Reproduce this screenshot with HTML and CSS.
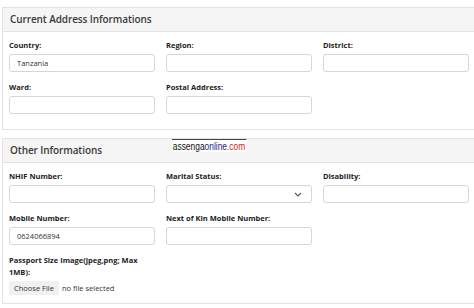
FILE: index.html
```html
<!DOCTYPE html>
<html lang="en">

<head>
    <meta charset="UTF-8">
    <meta name="viewport" content="width=device-width, initial-scale=1.0">
    <title>Registration form</title>
    <link rel="stylesheet" href="styles.css">
</head>

<body>
    <div class="card">
        <div class="card-header">Current Address Informations</div>
        <div class="card-body">
            <div class="row">
                <div class="group">
                    <label>Country:</label>
                    <input type="text" value="Tanzania">
                </div>
                <div class="group">
                    <label>Region:</label>
                    <input type="text">
                </div>
                <div class="group">
                    <label>District:</label>
                    <input type="text">
                </div>
            </div>
            <div class="row">
                <div class="group">
                    <label>Ward:</label>
                    <input type="text">
                </div>
                <div class="group">
                    <label>Postal Address:</label>
                    <input type="text">
                </div>
            </div>
        </div>
    </div>

    <div class="card second">
        <div class="card-header">Other Informations</div>
        <div class="watermark">assenga<span class="online">online</span><span class="com">.com</span></div>
        <div class="card-body">
            <div class="row">
                <div class="group">
                    <label>NHIF Number:</label>
                    <input type="text">
                </div>
                <div class="group">
                    <label>Marital Status:</label>
                    <div class="select">
                        <svg width="8" height="5" viewBox="0 0 8 5"><path d="M1 1 L4 4 L7 1" fill="none" stroke="#555" stroke-width="1.1"/></svg>
                    </div>
                </div>
                <div class="group">
                    <label>Disability:</label>
                    <input type="text">
                </div>
            </div>
            <div class="row">
                <div class="group">
                    <label>Mobile Number:</label>
                    <input type="text" value="0624066894">
                </div>
                <div class="group">
                    <label>Next of Kin Mobile Number:</label>
                    <input type="text">
                </div>
            </div>
            <div class="row">
                <div class="group last">
                    <label>Passport Size Image(jpeg,png; Max 1MB):</label>
                    <div class="file">
                        <span class="file-btn">Choose File</span>
                        <span>no file selected</span>
                    </div>
                </div>
            </div>
        </div>
    </div>
</body>

</html>
```

FILE: styles.css
```css
* {
    margin: 0;
    padding: 0;
    box-sizing: border-box;
    font-family: "Open Sans", sans-serif;
}

body {
    background: #fff;
    color: #333;
    padding-top: 7px;
    width: 480px;
}

.card {
    margin-left: 2px;
    width: 478px;
    border: 1px solid #e3e3e3;
    border-right: none;
    position: relative;
}

.second {
    margin-top: 8px;
}

.card-header {
    background: #f5f5f5;
    border-bottom: 1px solid #e3e3e3;
    height: 24px;
    padding: 0 7px;
    font-size: 10px;
    font-weight: 600;
    letter-spacing: -0.1px;
    line-height: 22px;
    color: #3a3a3a;
}

.card-body {
    padding: 7px 7px 6px 6px;
}

.row {
    display: grid;
    grid-template-columns: 146px 146px 146px;
    column-gap: 11px;
}

.group {
    margin-bottom: 9px;
}

.group.last {
    margin-bottom: 2px;
}

label {
    display: block;
    font-size: 7.5px;
    font-weight: bold;
    line-height: 12px;
    margin-bottom: 3px;
    color: #222;
}

input,
.select {
    display: block;
    width: 146px;
    height: 18px;
    border: 1px solid #d6d6d6;
    border-radius: 3px;
    padding: 0 7px;
    font-size: 7.5px;
    color: #333;
    background: #fff;
    outline: none;
}

.select {
    display: flex;
    align-items: center;
    justify-content: flex-end;
    padding-right: 9px;
}

.file {
    display: flex;
    align-items: center;
    gap: 3px;
    font-size: 7.5px;
    color: #333;
}

.file-btn {
    background: #f0f0f0;
    border-radius: 2px;
    padding: 2px 5px;
    line-height: 10px;
}

.watermark {
    position: absolute;
    left: 169px;
    top: 0;
    background: #fff;
    border-top: 1px solid #444;
    padding: 0 1px;
    font-family: "Liberation Sans", sans-serif;
    font-size: 10.5px;
    line-height: 12px;
    color: #111;
    transform: scaleX(0.8);
    transform-origin: left top;
}

.online {
    font-family: inherit;
    color: #1c1c86;
}

.com {
    font-family: inherit;
    color: #d42020;
}
```
